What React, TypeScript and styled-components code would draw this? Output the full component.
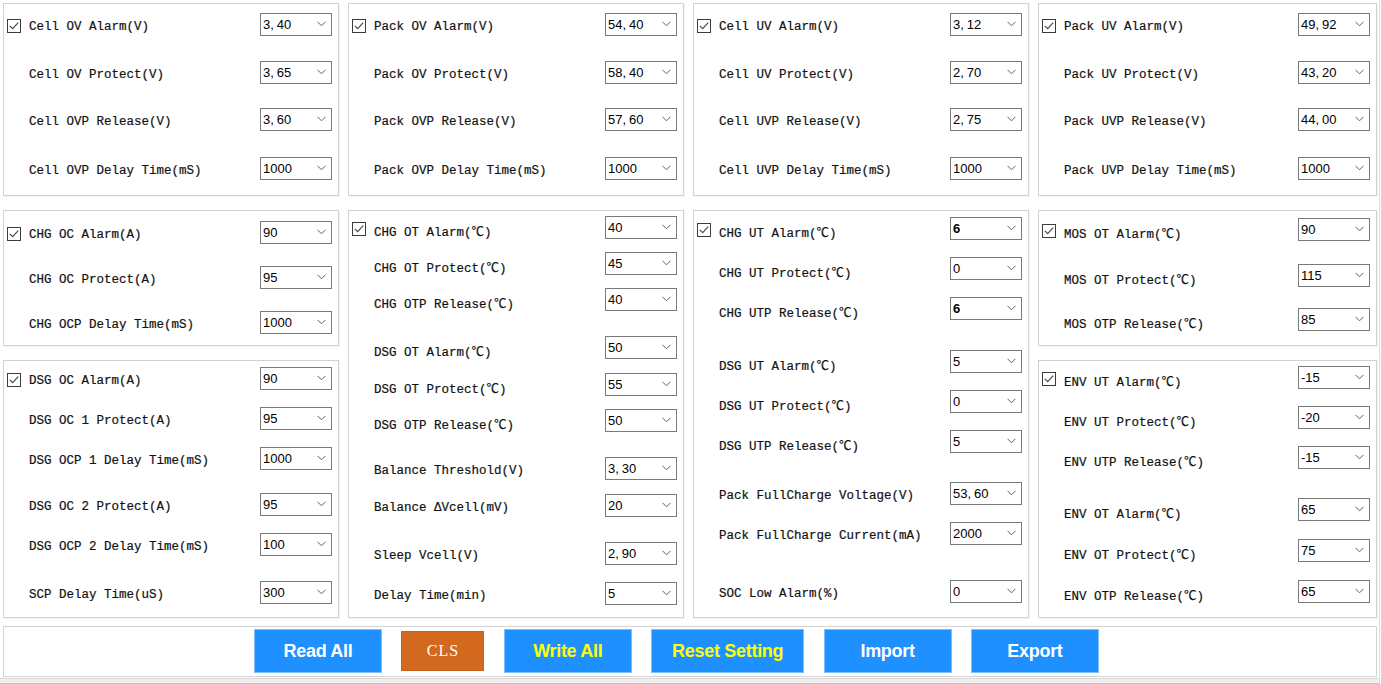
import React from "react";
import styled, { createGlobalStyle } from "styled-components";

const GlobalStyle = createGlobalStyle`
  html, body { margin: 0; padding: 0; background: #ffffff; }
  body { font-family: "Liberation Sans", Arial, sans-serif; }
`;

type Item = {
  label: string;
  value: string;
  mt: number;
  check?: boolean;
  bold?: boolean;
};

type PanelDef = { h: number; rows: Item[] };

const columns: PanelDef[][] = [
  [
    {
      h: 193,
      rows: [
        { label: "Cell OV Alarm(V)", value: "3,40", mt: 9, check: true },
        { label: "Cell OV Protect(V)", value: "3,65", mt: 25 },
        { label: "Cell OVP Release(V)", value: "3,60", mt: 24 },
        { label: "Cell OVP Delay Time(mS)", value: "1000", mt: 26 },
      ],
    },
    {
      h: 136,
      rows: [
        { label: "CHG OC Alarm(A)", value: "90", mt: 10, check: true },
        { label: "CHG OC Protect(A)", value: "95", mt: 22 },
        { label: "CHG OCP Delay Time(mS)", value: "1000", mt: 22 },
      ],
    },
    {
      h: 258,
      rows: [
        { label: "DSG OC Alarm(A)", value: "90", mt: 6, check: true },
        { label: "DSG OC 1 Protect(A)", value: "95", mt: 17 },
        { label: "DSG OCP 1 Delay Time(mS)", value: "1000", mt: 17 },
        { label: "DSG OC 2 Protect(A)", value: "95", mt: 23 },
        { label: "DSG OCP 2 Delay Time(mS)", value: "100", mt: 17 },
        { label: "SCP Delay Time(uS)", value: "300", mt: 25 },
      ],
    },
  ],
  [
    {
      h: 193,
      rows: [
        { label: "Pack OV Alarm(V)", value: "54,40", mt: 9, check: true },
        { label: "Pack OV Protect(V)", value: "58,40", mt: 25 },
        { label: "Pack OVP Release(V)", value: "57,60", mt: 24 },
        { label: "Pack OVP Delay Time(mS)", value: "1000", mt: 26 },
      ],
    },
    {
      h: 408,
      rows: [
        { label: "CHG OT Alarm(℃)", value: "40", mt: 5, check: true },
        { label: "CHG OT Protect(℃)", value: "45", mt: 13 },
        { label: "CHG OTP Release(℃)", value: "40", mt: 13 },
        { label: "DSG OT Alarm(℃)", value: "50", mt: 25 },
        { label: "DSG OT Protect(℃)", value: "55", mt: 14 },
        { label: "DSG OTP Release(℃)", value: "50", mt: 13 },
        { label: "Balance Threshold(V)", value: "3,30", mt: 25 },
        { label: "Balance ΔVcell(mV)", value: "20", mt: 14 },
        { label: "Sleep Vcell(V)", value: "2,90", mt: 25 },
        { label: "Delay Time(min)", value: "5", mt: 17 },
      ],
    },
  ],
  [
    {
      h: 193,
      rows: [
        { label: "Cell UV Alarm(V)", value: "3,12", mt: 9, check: true },
        { label: "Cell UV Protect(V)", value: "2,70", mt: 25 },
        { label: "Cell UVP Release(V)", value: "2,75", mt: 24 },
        { label: "Cell UVP Delay Time(mS)", value: "1000", mt: 26 },
      ],
    },
    {
      h: 408,
      rows: [
        { label: "CHG UT Alarm(℃)", value: "6", mt: 6, check: true, bold: true },
        { label: "CHG UT Protect(℃)", value: "0", mt: 17 },
        { label: "CHG UTP Release(℃)", value: "6", mt: 17, bold: true },
        { label: "DSG UT Alarm(℃)", value: "5", mt: 30 },
        { label: "DSG UT Protect(℃)", value: "0", mt: 17 },
        { label: "DSG UTP Release(℃)", value: "5", mt: 17 },
        { label: "Pack FullCharge Voltage(V)", value: "53,60", mt: 29 },
        { label: "Pack FullCharge Current(mA)", value: "2000", mt: 17 },
        { label: "SOC Low Alarm(%)", value: "0", mt: 35 },
      ],
    },
  ],
  [
    {
      h: 193,
      rows: [
        { label: "Pack UV Alarm(V)", value: "49,92", mt: 9, check: true },
        { label: "Pack UV Protect(V)", value: "43,20", mt: 25 },
        { label: "Pack UVP Release(V)", value: "44,00", mt: 24 },
        { label: "Pack UVP Delay Time(mS)", value: "1000", mt: 26 },
      ],
    },
    {
      h: 136,
      rows: [
        { label: "MOS OT Alarm(℃)", value: "90", mt: 7, check: true },
        { label: "MOS OT Protect(℃)", value: "115", mt: 23 },
        { label: "MOS OTP Release(℃)", value: "85", mt: 21 },
      ],
    },
    {
      h: 258,
      rows: [
        { label: "ENV UT Alarm(℃)", value: "-15", mt: 5, check: true },
        { label: "ENV UT Protect(℃)", value: "-20", mt: 17 },
        { label: "ENV UTP Release(℃)", value: "-15", mt: 17 },
        { label: "ENV OT Alarm(℃)", value: "65", mt: 29 },
        { label: "ENV OT Protect(℃)", value: "75", mt: 18 },
        { label: "ENV OTP Release(℃)", value: "65", mt: 18 },
      ],
    },
  ],
];

type ButtonKind = "blue" | "blueYellow" | "orange";

const buttons: { text: string; w: number; kind: ButtonKind }[] = [
  { text: "Read All", w: 128, kind: "blue" },
  { text: "CLS", w: 83, kind: "orange" },
  { text: "Write All", w: 128, kind: "blueYellow" },
  { text: "Reset Setting", w: 153, kind: "blueYellow" },
  { text: "Import", w: 128, kind: "blue" },
  { text: "Export", w: 128, kind: "blue" },
];

const Window = styled.div`
  width: 1380px;
  height: 684px;
  overflow: hidden;
  box-sizing: border-box;
  border-right: 1px solid #dcdcdc;
  padding: 3px 0 0 3px;
  display: flex;
  flex-direction: column;
`;

const Grid = styled.div`
  display: grid;
  grid-template-columns: 336px 336px 336px 339px;
  column-gap: 9px;
`;

const Column = styled.div`
  display: flex;
  flex-direction: column;
  gap: 14px;
`;

const Panel = styled.section<{ $h: number }>`
  height: ${(p) => p.$h}px;
  box-sizing: border-box;
  border: 1px solid #d2d2d2;
  box-shadow: inset 1px 1px 0 #ffffff, 1px 1px 0 #f3f3f3;
  padding: 0 6px 0 3px;
  display: flex;
  flex-direction: column;
`;

const Row = styled.div<{ $mt: number }>`
  height: 23px;
  margin-top: ${(p) => p.$mt}px;
  display: flex;
  align-items: center;
  justify-content: space-between;
`;

const LabelGroup = styled.div`
  display: flex;
  align-items: center;
  gap: 8px;
`;

const CheckBox = styled.span`
  width: 14px;
  height: 14px;
  box-sizing: border-box;
  border: 1px solid #3c3c3c;
  background: #ffffff;
  display: flex;
  align-items: center;
  justify-content: center;
  margin-top: 3px;
`;

const CheckGap = styled.span`
  width: 14px;
  height: 14px;
`;

const Label = styled.span`
  font-family: "Liberation Mono", "Noto Sans CJK SC", monospace;
  font-size: 12.5px;
  color: #111111;
  -webkit-text-stroke: 0.2px #111111;
  white-space: pre;
  padding-top: 5px;
`;

const Combo = styled.div`
  width: 72px;
  height: 23px;
  box-sizing: border-box;
  border: 1px solid #7a7a7a;
  background: #ffffff;
  display: flex;
  align-items: center;
  padding: 0 5px 1px 2px;
`;

const ComboValue = styled.span<{ $bold?: boolean }>`
  flex: 1;
  font-family: "Liberation Sans", Arial, sans-serif;
  font-size: 13px;
  font-weight: ${(p) => (p.$bold ? 700 : 400)};
  color: #000000;
  white-space: pre;
`;

const Comma = styled.span`
  margin-right: 3px;
`;

const BottomPanel = styled.div`
  margin-top: 8px;
  width: 1374px;
  height: 53px;
  box-sizing: border-box;
  border: 1px solid #d2d2d2;
  box-shadow: inset 1px 1px 0 #ffffff;
  display: flex;
  align-items: center;
  gap: 19.4px;
  padding: 0 0 1px 250px;
`;

const ActionButton = styled.button<{ $w: number; $kind: ButtonKind }>`
  width: ${(p) => p.$w}px;
  height: ${(p) => (p.$kind === "orange" ? 40 : 44)}px;
  margin: 0;
  padding: 0;
  border: 1px solid ${(p) => (p.$kind === "orange" ? "#c8621c" : "#7cc0ff")};
  background: ${(p) => (p.$kind === "orange" ? "#d2691e" : "#1e90ff")};
  color: ${(p) => (p.$kind === "blueYellow" ? "#ffff00" : "#ffffff")};
  font-family: ${(p) =>
    p.$kind === "orange"
      ? `"Liberation Serif", "DejaVu Serif", serif`
      : `"Liberation Sans", Arial, sans-serif`};
  font-size: ${(p) => (p.$kind === "orange" ? 16 : 18)}px;
  font-weight: ${(p) => (p.$kind === "orange" ? 400 : 700)};
  letter-spacing: ${(p) => (p.$kind === "orange" ? 1 : -0.3)}px;
  cursor: pointer;
`;

const WindowEdge = styled.div`
  margin: 1px 0 0 -3px;
  height: 4px;
  border-top: 1px solid #d6d6d6;
  border-bottom: 1px solid #c4c4c4;
  background: #f0f0f0;
`;

function Chevron() {
  return (
    <svg width="9" height="6" viewBox="0 0 9 6" fill="none">
      <path d="M0.5 0.8 L4.5 4.8 L8.5 0.8" stroke="#5f5f5f" strokeWidth="1" />
    </svg>
  );
}

function Tick() {
  return (
    <svg width="12" height="12" viewBox="0 0 12 12" fill="none">
      <path d="M1.8 5.8 L4.7 8.7 L10.2 2.6" stroke="#4a4a4a" strokeWidth="1.2" />
    </svg>
  );
}

function Value({ text, bold }: { text: string; bold?: boolean }) {
  const parts = text.split(",");
  return (
    <ComboValue $bold={bold}>
      {parts.length === 2 ? (
        <>
          {parts[0]}
          <Comma>,</Comma>
          {parts[1]}
        </>
      ) : (
        text
      )}
    </ComboValue>
  );
}

function SettingRow({ item }: { item: Item }) {
  return (
    <Row $mt={item.mt}>
      <LabelGroup>
        {item.check ? (
          <CheckBox>
            <Tick />
          </CheckBox>
        ) : (
          <CheckGap />
        )}
        <Label>{item.label}</Label>
      </LabelGroup>
      <Combo>
        <Value text={item.value} bold={item.bold} />
        <Chevron />
      </Combo>
    </Row>
  );
}

export default function App() {
  return (
    <>
      <GlobalStyle />
      <Window>
        <Grid>
          {columns.map((col, ci) => (
            <Column key={ci}>
              {col.map((panel, pi) => (
                <Panel key={pi} $h={panel.h}>
                  {panel.rows.map((item) => (
                    <SettingRow key={item.label} item={item} />
                  ))}
                </Panel>
              ))}
            </Column>
          ))}
        </Grid>
        <BottomPanel>
          {buttons.map((b) => (
            <ActionButton key={b.text} $w={b.w} $kind={b.kind}>
              {b.text}
            </ActionButton>
          ))}
        </BottomPanel>
        <WindowEdge />
      </Window>
    </>
  );
}
